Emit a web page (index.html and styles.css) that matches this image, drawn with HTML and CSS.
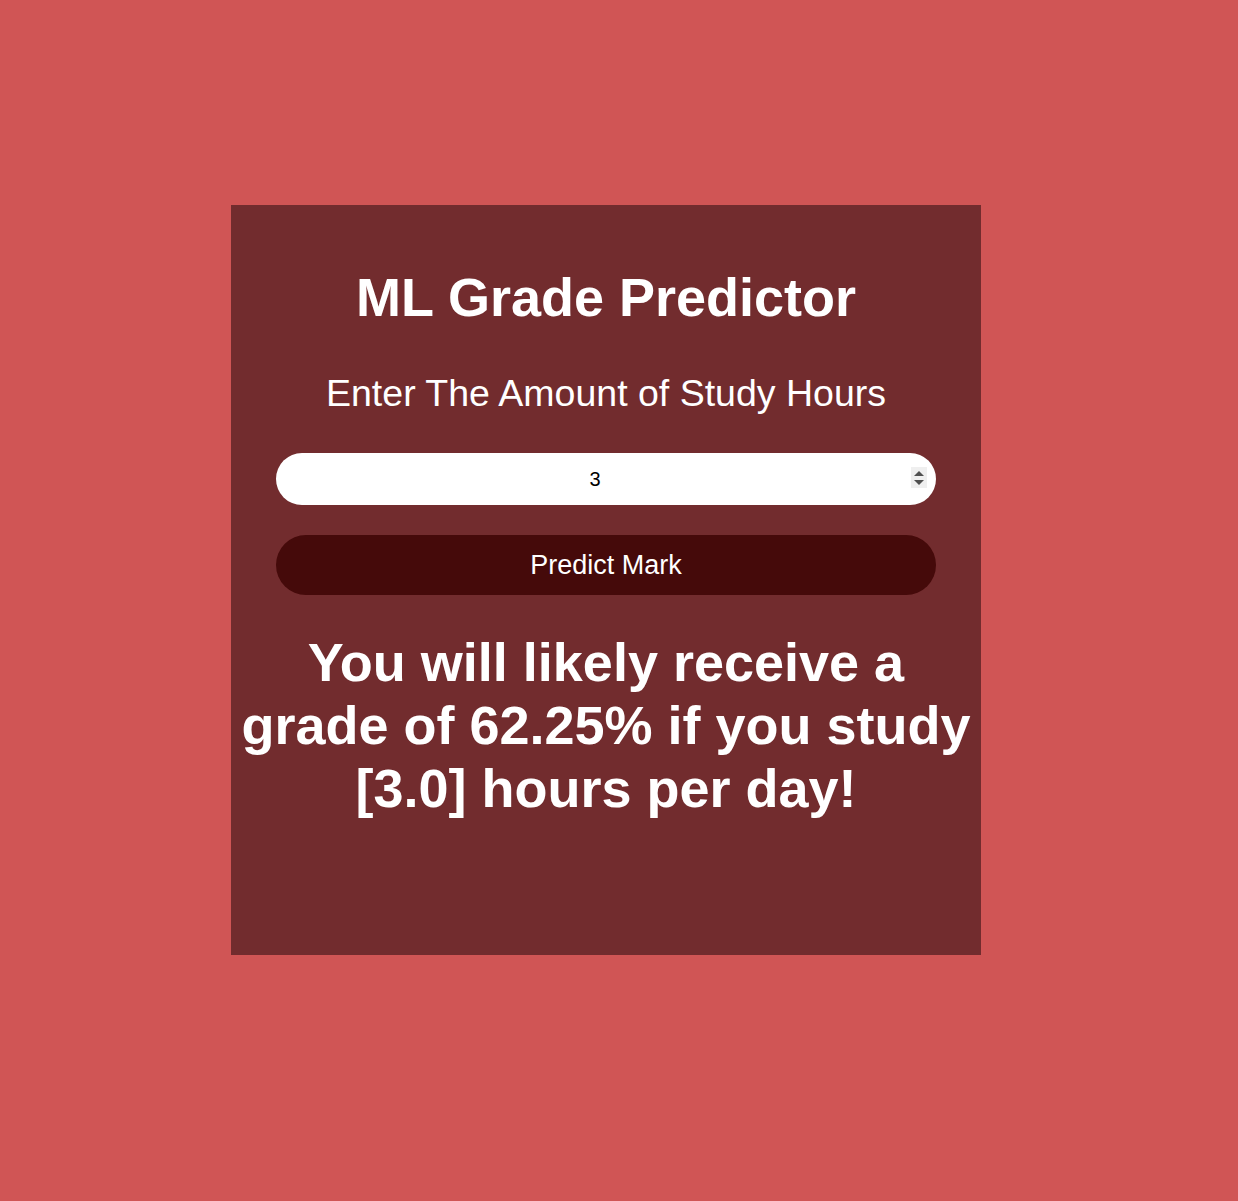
FILE: index.html
```html
<!DOCTYPE html>
<html>
<head>
<meta charset="utf-8">
<link rel="stylesheet" href="styles.css">
</head>
<body>
<div class="page">
  <div class="card">
    <h1 class="title">ML Grade Predictor</h1>
    <p class="label">Enter The Amount of Study Hours</p>
    <form class="form">
      <div class="field">
        <input class="hours" type="number" value="3">
        <span class="spin"><span class="up"></span><span class="down"></span></span>
      </div>
      <button class="predict" type="button">Predict Mark</button>
    </form>
    <h2 class="result">You will likely receive a grade of 62.25% if you study [3.0] hours per day!</h2>
  </div>
</div>
</body>
</html>
```
FILE: styles.css
```css
html, body {
  margin: 0;
  padding: 0;
  background: #d05555;
  font-family: "Liberation Sans", Arial, sans-serif;
}
.page {
  padding: 205px 0 0 231px;
  min-height: 1201px;
  box-sizing: border-box;
}
.card {
  width: 750px;
  height: 750px;
  background: #722c2e;
  box-sizing: border-box;
  padding: 0 45px;
  display: flex;
  flex-direction: column;
  color: #fff;
  text-align: center;
}
.title {
  margin: 60px 0 0;
  font-size: 54px;
  line-height: 64px;
  font-weight: bold;
}
.label {
  margin: 43px 0 0;
  font-size: 37.5px;
  line-height: 42px;
}
.form {
  margin: 39px 0 0;
  display: flex;
  flex-direction: column;
  gap: 30px;
}
.field {
  position: relative;
  height: 52px;
}
.hours {
  width: 100%;
  height: 52px;
  box-sizing: border-box;
  border: none;
  border-radius: 26px;
  background: #fff;
  text-align: center;
  font-family: "Liberation Sans", Arial, sans-serif;
  font-size: 20px;
  padding: 0 30px 0 8px;
  color: #000;
  outline: none;
  -moz-appearance: textfield;
}
.hours::-webkit-inner-spin-button,
.hours::-webkit-outer-spin-button {
  -webkit-appearance: none;
  margin: 0;
}
.spin {
  position: absolute;
  right: 9px;
  top: 14px;
  width: 16px;
  height: 21px;
  background: #efefef;
  display: flex;
  flex-direction: column;
  align-items: center;
  justify-content: center;
  gap: 4px;
}
.up {
  width: 0;
  height: 0;
  border-left: 5px solid transparent;
  border-right: 5px solid transparent;
  border-bottom: 5px solid #505050;
}
.down {
  width: 0;
  height: 0;
  border-left: 5px solid transparent;
  border-right: 5px solid transparent;
  border-top: 5px solid #505050;
}
.predict {
  height: 60px;
  border: none;
  border-radius: 30px;
  background: #450a0a;
  color: #fff;
  font-family: "Liberation Sans", Arial, sans-serif;
  font-size: 27px;
}
.result {
  margin: 36px -40px 0;
  font-size: 54px;
  line-height: 63px;
  font-weight: bold;
}
```
